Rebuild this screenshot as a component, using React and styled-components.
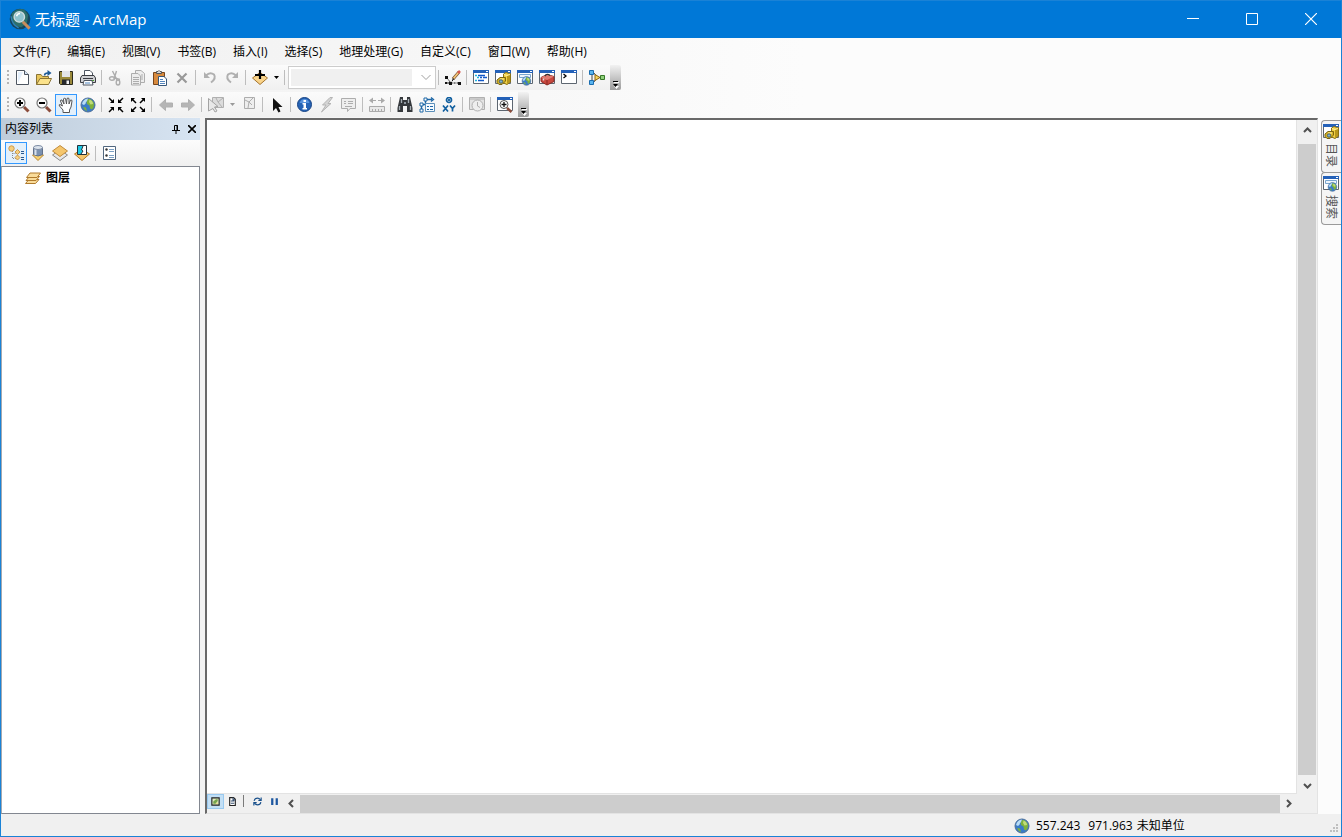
// dependencies
import React from "react";
import styled, { createGlobalStyle, css } from "styled-components";

const GlobalStyle = createGlobalStyle`
  * {
    box-sizing: border-box;
  }

  body {
    margin: 0;
    overflow: hidden;
    font-family: "Open Sans", "Noto Sans CJK SC", sans-serif;
    font-size: 12px;
    line-height: 16px;
    color: #000;
  }

  button,
  select {
    font: inherit;
    color: inherit;
  }

  svg {
    display: block;
    flex: none;
  }
`;

// window

const Window = styled.div`
  display: flex;
  flex-direction: column;
  height: 100vh;
  border: solid #1a82d6;
  border-width: 0 1px 1px;
  background: linear-gradient(90deg, #f0f0f0, #fcfcfc 60%);
`;

const TitleBar = styled.header`
  display: flex;
  align-items: center;
  height: 38px;
  padding: 0 1px 1px 8px;
  border-top: 1px solid #1a82d6;
  background: #0078d7;
  color: #fff;
`;

const Title = styled.h1`
  flex: 1;
  margin: 0 0 0 4px;
  font-size: 15px;
  font-weight: 400;
  line-height: 20px;
`;

const plainButton = css`
  display: flex;
  align-items: center;
  justify-content: center;
  flex: none;
  padding: 0;
  border: 0;
  background: transparent;
`;

const CaptionButton = styled.button`
  ${plainButton}
  width: 59px;
  height: 36px;
`;

const MenuBar = styled.nav`
  display: flex;
  align-items: center;
  gap: 1px;
  height: 27px;
  padding-left: 4px;
`;

const MenuItem = styled.button`
  ${plainButton}
  height: 22px;
  padding: 0 8px;
`;

// toolbars

const ToolbarRow = styled.div`
  display: flex;
  height: 26px;
  margin-bottom: ${(props) => (props.$last ? "0" : "1px")};
`;

const Toolbar = styled.div`
  display: flex;
  align-items: center;
  height: 25px;
  padding-left: 5px;
  background: linear-gradient(#fbfbfb, #f0f0f0);
`;

const Grip = styled.span`
  width: 5px;
  height: 15px;
  background: repeating-linear-gradient(#b4b4b4 0 2px, transparent 2px 4px) 1px 0 / 2px 100% no-repeat;
`;

const ToolButton = styled.button`
  ${plainButton}
  width: 22px;
  height: 22px;
  border: 1px solid ${(props) => (props.$active ? "#3399ff" : "transparent")};
  background: ${(props) => (props.$active ? "#e3f0fb" : "transparent")};
`;

const CaretButton = styled.button`
  ${plainButton}
  width: 11px;
  height: 22px;
`;

const Separator = styled.span`
  flex: none;
  width: 1px;
  height: 15px;
  margin: 0 3px 0 2px;
  background: #bdbdbd;
`;

const OverflowButton = styled.button`
  ${plainButton}
  align-items: flex-end;
  align-self: flex-start;
  width: 11px;
  height: 25px;
  margin-left: 2px;
  padding-bottom: 1px;
  border-radius: 0 2px 2px 0;
  background: linear-gradient(#f2f2f2, #9c9c9c);
`;

const ScaleBox = styled.label`
  position: relative;
  width: 148px;
  height: 23px;
`;

const ScaleSelect = styled.select`
  appearance: none;
  display: block;
  width: 100%;
  height: 100%;
  padding: 2px 23px 2px 2px;
  border: 1px solid #ccc;
  border-radius: 0;
  background: linear-gradient(#f0f0f0, #f0f0f0) content-box, #fff;
  opacity: 1;
`;

const ScaleArrow = styled.svg`
  position: absolute;
  top: 8px;
  right: 5px;
  pointer-events: none;
`;

// table of contents

const Workspace = styled.main`
  display: flex;
  flex: 1;
  min-height: 0;
`;

const TocPanel = styled.aside`
  display: flex;
  flex-direction: column;
  flex: none;
  width: 199px;
`;

const TocHeader = styled.div`
  display: flex;
  align-items: center;
  height: 22px;
  padding-left: 4px;
  background: linear-gradient(90deg, #bfcddb, #d7e4f2);
`;

const TocTitle = styled.h2`
  flex: 1;
  margin: 0;
  font-size: 12px;
  font-weight: 400;
`;

const HeaderButton = styled.button`
  ${plainButton}
  width: 16px;
  height: 16px;
`;

const TocToolbar = styled.div`
  display: flex;
  align-items: center;
  height: 26px;
  padding-left: 4px;
  background: linear-gradient(#fcfcfc, #f0f0f0);
`;

const LayerTree = styled.ul`
  flex: 1;
  margin: 0;
  padding: 2px 0 0 23px;
  border: 1px solid #828790;
  border-left-color: #a5a9b0;
  background: #fff;
  list-style: none;
`;

const LayerItem = styled.li`
  display: flex;
  align-items: center;
  gap: 5px;
  height: 18px;
  font-weight: 700;
`;

// map view

const MapFrame = styled.section`
  display: flex;
  flex: 1;
  min-width: 0;
  margin-left: 5px;
  border: solid;
  border-width: 2px 1px 1px 2px;
  border-color: #696969 #e3e3e3 #e3e3e3 #696969;
  background: #f0f0f0;
`;

const MapColumn = styled.div`
  display: flex;
  flex-direction: column;
  flex: 1;
  min-width: 0;
`;

const MapCanvas = styled.div`
  flex: 1;
  border: solid #e3e3e3;
  border-width: 0 1px 1px 0;
  background: #fff;
`;

const BottomBar = styled.div`
  display: flex;
  height: 19px;
`;

const ViewButton = styled.button`
  ${plainButton}
  width: 17px;
  height: 15px;
  border: ${(props) => (props.$active ? "1px solid #99c9ef" : "0")};
  background: ${(props) => (props.$active ? "#c2dff5" : "transparent")};
`;

const ViewSeparator = styled.span`
  width: 1px;
  height: 12px;
  margin: 1px 5px 0 2px;
  background: #7a7a7a;
`;

const ScrollColumn = styled.div`
  display: flex;
  flex-direction: column;
  flex: none;
  width: 20px;
  padding: 0 1px 18px;
`;

const ScrollButton = styled.button`
  ${plainButton}
  width: ${(props) => (props.$horizontal ? "17px" : "100%")};
  height: ${(props) => (props.$horizontal ? "19px" : "20px")};
`;

const ScrollThumb = styled.div`
  flex: 1;
  margin: ${(props) => (props.$horizontal ? "1px 0 0" : "4px 0 0")};
  background: #cdcdcd;
`;

// dock

const Dock = styled.aside`
  display: flex;
  flex-direction: column;
  flex: none;
  width: 23px;
  padding: 2px 0 0 3px;
`;

const DockTab = styled.button`
  ${plainButton}
  flex-direction: column;
  justify-content: flex-start;
  gap: 3px;
  height: 53px;
  margin-bottom: -1px;
  padding: 3px 1px 0 0;
  border: 1px solid #9a9a9a;
  border-right: 0;
  border-radius: 4px 0 0 4px;
  background: #f5f5f5;
  color: #555;
`;

const DockLabel = styled.span`
  writing-mode: vertical-rl;
  text-orientation: sideways;
`;

// status

const StatusBar = styled.footer`
  display: flex;
  align-items: center;
  justify-content: flex-end;
  height: 22px;
  padding-top: 2px;
  background: #f0f0f0;
`;

const Coordinates = styled.output`
  display: flex;
  flex: none;
  gap: 8px;
  width: 281px;
  margin-left: 6px;
`;

const Units = styled.span`
  margin-left: -4px;
`;

const SizeGrip = styled.svg`
  align-self: flex-end;
  margin: 0 2px 2px 12px;
`;

// icons

const Icon = ({ children, size = 16, ...rest }) => (
  <svg
    width={size}
    height={size}
    viewBox="0 0 16 16"
    fill="none"
    aria-hidden="true"
    {...rest}
  >
    {children}
  </svg>
);

const Globe = () => (
  <>
    <circle cx="8" cy="8" r="7" fill="#3a7bc8" stroke="#4d6f98" />
    <path d="M2 7Q3 2 8 1.500Q8 4 6 5Q6 7 4 8Z" fill="#b9dcf5" />
    <path d="M8 2Q12 1.500 14 6.500Q14.500 10 12 12.500L10 11.500L9.500 8.500L7 7Q6 5 8 2ZM3 10L6 10.500L7 14Q4 13 3 10Z" fill="#7fb23c" />
    <path d="M9.500 2.500Q13 3.500 13 7L10.500 7.500L9 5Z" fill="#c0dc7a" />
  </>
);

const Panel = ({ children }) => (
  <>
    <path d="M.5 .5H15.500V13.500H.5Z" fill="#fff" stroke="#5d6670" />
    <path d="M0 0H16V3H0Z" fill="#2461b8" />
    <path d="M13 1H15V2H13Z" fill="#fff" />
    {children}
  </>
);

const Lens = ({ sign }) => (
  <>
    <path d="M10 10L14.500 14.500" stroke="#8b4c3b" strokeWidth="3" />
    <circle cx="6" cy="6" r="5" fill="#fafafa" stroke="#777" strokeWidth="1.200" />
    <path d={sign} stroke="#000" strokeWidth="2" />
  </>
);

const icons = {
  app: (
    <>
      <circle cx="8" cy="8" r="7.500" fill="#15465f" />
      <path d="M2 4Q6 0 11 1L14 5L13 11L9 14Q3 13 2 9Z" fill="#2d6f6c" />
      <path d="M1.500 6Q2 12 7 14.500" stroke="#2f83b8" />
      <path d="M10 10L15 15" stroke="#c98d5c" strokeWidth="2.200" />
      <circle cx="7.500" cy="6.500" r="3.800" fill="#8fc3cf" stroke="#cfdcde" />
      <path d="M5.500 6Q6 4 8 4" stroke="#fff" />
    </>
  ),
  new: (
    <>
      <path d="M2.500 .5H10L14.500 4.500V14.500H2.500Z" fill="#fff" stroke="#4d5560" />
      <path d="M4 2H9L4 13Z" fill="#e4effb" />
      <path d="M10.500 .5V4.500H14.500" fill="#d5e4f5" stroke="#4d5560" />
    </>
  ),
  open: (
    <>
      <path d="M.5 14.500V4.500H5L6.500 6.500H12.500V9" fill="#e8c65b" stroke="#8a7436" />
      <path d="M.5 14.500L4 8.500H15.500L12.500 14.500Z" fill="#fbe28b" stroke="#8a7436" />
      <path d="M8.500 5.500Q8.500 3 12 3" stroke="#1c5a97" strokeWidth="1.500" />
      <path d="M11.500 0L15.500 3L11.500 6Z" fill="#1c5a97" />
    </>
  ),
  save: (
    <>
      <path d="M1.500 1.500H14.500V14.500H2.500L1.500 13.500Z" fill="#9b8a3b" stroke="#2d2b1c" />
      <path d="M4 1H12V7H4Z" fill="#e4e5e8" />
      <path d="M4 9.500H12V14.500H4Z" fill="#25272c" />
      <path d="M8.500 10.500H11V14H8.500Z" fill="#f4f4f4" />
    </>
  ),
  print: (
    <>
      <path d="M4.500 6V.5H10L12.500 3V6" fill="#fff" stroke="#4d5560" />
      <path d="M2 5.500H14L15.500 8V12.500H.5V8Z" fill="#cfd0d3" stroke="#3b3d42" />
      <path d="M3 8.500H13" stroke="#3b3d42" />
      <path d="M13 10V11" stroke="#4aa02c" strokeWidth="2" />
      <path d="M4 10.500H12L13 15H3Z" fill="#fff" stroke="#4d5560" />
      <path d="M5 13H10" stroke="#4e86c0" />
    </>
  ),
  cut: (
    <g stroke="#adadad" strokeWidth="1.400">
      <path d="M4.500 1L9 10M8.500 1L6 9" />
      <ellipse cx="4" cy="8.500" rx="2.500" ry="1.800" />
      <ellipse cx="10" cy="12.500" rx="1.800" ry="2.500" />
      <path d="M6.500 8L12 9.500" />
    </g>
  ),
  copy: (
    <g fill="#ededed" stroke="#adadad">
      <path d="M5.500 .5H11L14.500 3.500V12.500H5.500Z" />
      <path d="M1.500 3.500H8L10.500 6V15H1.500Z" />
      <path d="M3 7.500H9M3 9.500H9M3 11.500H9M3 13.500H9M11 5H13M11 7H13M11 9H13" />
    </g>
  ),
  paste: (
    <>
      <path d="M1.500 2.500H12.500V14.500H1.500Z" fill="#d88a3d" stroke="#76451c" />
      <path d="M4.500 3.500V1.500H6L7 .5L8 1.500H9.500V3.500Z" fill="#d6d6d6" stroke="#555" />
      <path d="M6.500 6.500H12L14.500 9V15.500H6.500Z" fill="#fff" stroke="#385778" />
      <path d="M8 9.500H11M8 11.500H13M8 13.500H13" stroke="#5485bd" />
    </>
  ),
  remove: <path d="M3.500 3.500L12.500 12.500M12.500 3.500L3.500 12.500" stroke="#999" strokeWidth="2.200" />,
  undo: (
    <>
      <path d="M4 5.500Q8 1.500 12 4.500Q14.500 8.500 9 12.500" stroke="#b0b0b0" strokeWidth="2" />
      <path d="M2 2V8H8Z" fill="#b0b0b0" />
    </>
  ),
  add: (
    <>
      <path d="M.5 8L8 2.500L15.500 8L8 14.500Z" fill="#fad48a" stroke="#a4742f" />
      <path d="M8 0V9M3 5H13" stroke="#000" strokeWidth="2.200" />
    </>
  ),
  editor: (
    <>
      <path d="M2 8L6 13L14 13M2 13H6L9 8" stroke="#111" strokeDasharray="2 1" />
      <path d="M0 6H3V9H0ZM4 12H7V15H4ZM13 12H16V15H13ZM0 12H2V14H0Z" fill="#111" />
      <path d="M8 9L14 2" stroke="#775036" strokeWidth="3" />
      <path d="M8.500 8.500L13.500 2.500" stroke="#f4c674" strokeWidth="1.800" />
      <path d="M13 3L15 1" stroke="#d8594f" strokeWidth="2.500" />
      <path d="M7 10.500L8 8L9.500 9.500Z" fill="#333" />
    </>
  ),
  toc: (
    <Panel>
      <path d="M2 5.500H4M4 7.500H6M2 10.500H4" stroke="#20b5df" strokeWidth="1.400" />
      <path d="M5 5.500H12M7 7.500H9M10 7.500H14M5 10.500H11" stroke="#1258c9" strokeWidth="1.400" />
    </Panel>
  ),
  catalog: (
    <Panel>
      <path d="M8.500 4L11 2.500L15.500 4V12L12 14.500L8.500 13Z" fill="#f1d045" stroke="#8a7214" />
      <path d="M12 5.500V14L15 12V4.500Z" fill="#b8971c" />
      <path d="M9 4.500L12 5.500L15 4.500" stroke="#fff0a0" />
      <path d="M2 12.500V10L5 7.500H10.500V11L7 14.500H4Z" fill="#d7b425" stroke="#7a6512" />
      <path d="M5 9H9" stroke="#fbe783" strokeWidth="1.400" />
      <circle cx="6" cy="11.500" r="1.700" fill="#7db2cf" stroke="#4b6269" />
    </Panel>
  ),
  search: (
    <Panel>
      <path d="M2.500 4.500H13.500V7.500H2.500Z" fill="#edf4fb" stroke="#79a5ce" />
      <g transform="translate(4.500 6) scale(.62)">
        <Globe />
      </g>
    </Panel>
  ),
  toolbox: (
    <Panel>
      <path d="M2 7.500L8 4.500L15 6.500V11.500L8 15L2 11.500Z" fill="#c8473e" stroke="#8b2a23" />
      <path d="M2 7.500L8 10L15 6.500L8 4.500Z" fill="#df7a70" />
      <path d="M8 10V15" stroke="#8b2a23" />
      <path d="M6 6Q8 3 11 5.500" stroke="#333" strokeWidth="1.400" />
      <path d="M4.500 8.500V10.500" stroke="#ddd" strokeWidth="1.500" />
    </Panel>
  ),
  python: (
    <Panel>
      <path d="M2.500 4L5 6L2.500 8" stroke="#000" strokeWidth="1.300" />
    </Panel>
  ),
  model: (
    <>
      <path d="M3 3V12M5 3L8 7L5 12M10 7.500H13" stroke="#444" />
      <path d="M.5 .5H4.500V4.500H.5Z M.5 10.500H4.500V14.500H.5Z" fill="#59b4ee" stroke="#1a6caf" />
      <path d="M6 4.500L11 7.500L6 10.500Z" fill="#f6d45b" stroke="#8c6512" />
      <path d="M11.500 5.500H15.500V9.500H11.500Z" fill="#8fd07a" stroke="#367728" />
    </>
  ),
  zoomIn: <Lens sign="M6 3V9M3 6H9" />,
  zoomOut: <Lens sign="M3 6H9" />,
  pan: (
    <path
      d="M5 15.500V13L1.500 9Q.5 7.500 2 7.500L4.500 9L2.500 4Q2.500 2.500 4 3L6 7L5.500 2Q6 .5 7.500 1.500L8.500 7L9 1.500Q10 .5 11 1.500L11 7L12.500 3Q14 2.500 14 4L13 10L11.500 13V15.500Z"
      fill="#fff"
      stroke="#555"
    />
  ),
  globe: <Globe />,
  shrink: (
    <>
      <path d="M1 1L5 5M15 1L11 5M1 15L5 11M15 15L11 11" stroke="#000" strokeWidth="1.500" />
      <path d="M6 2V6H2ZM10 2V6H14ZM6 14V10H2ZM10 14V10H14Z" fill="#000" />
    </>
  ),
  expand: (
    <>
      <path d="M2 2L6 6M14 2L10 6M2 14L6 10M14 14L10 10" stroke="#000" strokeWidth="1.500" />
      <path d="M1 5V1H5ZM15 5V1H11ZM1 11V15H5ZM15 11V15H11Z" fill="#000" />
    </>
  ),
  back: <path d="M1.500 8L7.500 2.500V6H14.500V10H7.500V13.500Z" fill="#b5b5b5" stroke="#b0b0b0" />,
  forward: <path d="M14.500 8L8.500 2.500V6H1.500V10H8.500V13.500Z" fill="#b5b5b5" stroke="#b0b0b0" />,
  select: (
    <g stroke="#b0b0b0">
      <path d="M4.500 .5H15.500V10.500H4.500Z" fill="#dcdcdc" />
      <path d="M8 1L10 5L15 1M10 5L14 10" />
      <path d="M.5 1.500L10 9.500L6.500 10L9 14L7 15L5 11.500L.5 14Z" fill="#e8e8e8" stroke="#a3a3a3" />
    </g>
  ),
  clear: (
    <g stroke="#adadad">
      <path d="M3.500 .5H13.500V11.500H3.500Z" fill="#eee" />
      <path d="M4 3L8 5L12 1M8 5L7 11M8 5L11 8" />
    </g>
  ),
  arrow: <path d="M4 1V14L7 11L9.500 15.500L11.500 14.500L9.500 10H13.500Z" fill="#111" />,
  identify: (
    <>
      <circle cx="7.500" cy="7.500" r="7" fill="#2563b5" stroke="#174384" />
      <path d="M2.500 6Q4 2 7.500 2Q11 2 12.500 6Z" fill="#5a94dc" />
      <path d="M6.500 3H9V5H6.500ZM5.500 6H9V11H10V12.500H5.500V11H6.500V7.500H5.500Z" fill="#fff" />
    </>
  ),
  link: <path d="M11 .5L3.500 8H7L2.500 15L12 6.500H9L13.500 .5Z" fill="#d4d4d4" stroke="#b4b4b4" />,
  popup: (
    <g stroke="#adadad">
      <path d="M.5 1.500H14.500V11.500H9L6.500 14.500V11.500H.5Z" fill="#eee" />
      <path d="M3 4.500H5M7 4.500H12M3 6.500H5M7 6.500H12M4 9.500H11" />
    </g>
  ),
  measure: (
    <>
      <path d="M0 3.500L4 .5V3H6V4H4V6.500ZM16 3.500L12 .5V3H10V4H12V6.500Z" fill="#aaa" />
      <path d="M4 3H7V4H4ZM9 3H12V4H9Z" fill="#aaa" />
      <path d="M.5 9.500H15.500V14.500H.5Z" fill="#e8e8e8" stroke="#aaa" />
      <path d="M3.500 12V14M6.500 12V14M9.500 12V14M12.500 12V14" stroke="#aaa" />
    </>
  ),
  find: (
    <>
      <path d="M3 0H6V3H10V0H13L15.500 11V15H10V9H6V15H.5V11Z" fill="#35383c" />
      <path d="M4.500 2V6M11.500 2V6M2.500 9V13M13.500 9V13" stroke="#a5adb4" strokeWidth="1.300" />
      <path d="M7 5H9V7H7Z" fill="#8d969f" />
    </>
  ),
  route: (
    <g stroke="#1d67a6">
      <path d="M2.500 13V7.500H6.500V2.500H13M12 .5L14.500 2.500L12 4.500" strokeWidth="1.300" />
      <path d="M1 6H4V9H1ZM5 1H8V4H5ZM1 12H4V15H1Z" fill="#fff" />
      <path d="M6.500 6.500H15.500V14.500H6.500Z" fill="#f5faff" stroke="#5c8fb9" />
      <path d="M8 9.500H10M11 9.500H14M8 12.500H10M11 12.500H14" />
    </g>
  ),
  xy: (
    <g stroke="#1260a0" strokeWidth="1.700">
      <circle cx="8" cy="3" r="2.500" />
      <circle cx="8" cy="3" r=".5" />
      <path d="M2 8.500L7 14.500M7 8.500L2 14.500M9 8.500L11.500 11.500L14 8.500M11.500 11.500V14.500" />
    </g>
  ),
  time: (
    <g stroke="#b0b0b0">
      <path d="M.5 .5H15.500V12.500H.5Z" fill="#e4e4e4" />
      <path d="M0 2H16" />
      <circle cx="8.500" cy="8.500" r="5.500" fill="#eee" />
      <path d="M8.500 5V9L11 10.500" />
    </g>
  ),
  viewer: (
    <Panel>
      <path d="M10 11L14.500 15" stroke="#8b4c3b" strokeWidth="2.500" />
      <circle cx="7" cy="7.500" r="4" fill="#fff" stroke="#555" />
      <path d="M7 5V10M4.500 7.500H9.500" stroke="#111" strokeWidth="1.300" />
    </Panel>
  ),
  order: (
    <>
      <path d="M4.500 6V13.500H8M4.500 8.500H8" stroke="#8b8b8b" strokeDasharray="1 1" />
      <circle cx="3.500" cy="3.500" r="2.700" fill="#f6cf7c" stroke="#c99a52" />
      <path d="M9.500 4.500L12 7L9.500 9.500L7 7ZM9.500 10L12 12.500L9.500 15L7 12.500Z" fill="#f6cf7c" stroke="#c99a52" />
      <path d="M13 6.500H16M13 8.500H16M13 12.500H16M13 14.500H16" stroke="#285991" />
    </>
  ),
  source: (
    <>
      <path d="M2.500 10L8 9L13.500 10L8 15.500Z" fill="#f8d16f" stroke="#b58331" />
      <path d="M3.500 2.500V9.500Q8 12.500 12.500 9.500V2.500" fill="#7b91b0" stroke="#62718a" />
      <path d="M5.500 4V10" stroke="#d8e1ec" strokeWidth="2" />
      <ellipse cx="8" cy="2.500" rx="4.500" ry="2" fill="#dce4ed" stroke="#7c8ba3" />
    </>
  ),
  visibility: (
    <>
      <path d="M.5 10L8 5L15.500 10L8 15.500Z" fill="#e7e7e7" stroke="#888" />
      <path d="M.5 6L8 .5L15.500 6L8 11.500Z" fill="#f5c66c" stroke="#c08a3a" />
    </>
  ),
  selection: (
    <>
      <path d="M.5 9L8 4L15.500 9L8 15.500Z" fill="#f5c66c" stroke="#b47a27" />
      <path d="M3.500 .5H12.500V9.500H3.500Z" fill="#1dc8e4" stroke="#25313a" />
      <path d="M9 1H12V9H7L9 6L7.500 5Z" fill="#fff" />
      <path d="M9 1L7.500 5L9 6L7 9" stroke="#25313a" />
    </>
  ),
  options: (
    <>
      <path d="M1.500 1.500H13.500V14.500H1.500Z" fill="#fff" stroke="#51677f" />
      <circle cx="4.500" cy="4.500" r="1.200" fill="#333" />
      <circle cx="4.500" cy="10.500" r="1.200" fill="#333" />
      <path d="M7 4.500H12M7 6.500H12M7 10.500H12M7 12.500H12" stroke="#7ba0c4" />
    </>
  ),
  layers: (
    <g fill="#f9dc9a" stroke="#b07a2c">
      <path d="M.5 13.500L4 9.500H14L10.500 13.500Z" />
      <path d="M1 10.500L4.500 6.500H14.500L11 10.500Z" />
      <path d="M1.500 7.500L5 3H15.500L12 7.500Z" />
    </g>
  ),
  dataView: (
    <>
      <path d="M1.500 1.500H14.500V14.500H1.500Z" fill="#dfeac0" stroke="#222" strokeWidth="2" />
      <path d="M4 12V8L9 4H12V7L8 12Z" fill="#76a54d" />
      <path d="M9 10H12V12H9Z" fill="#f0d77a" />
    </>
  ),
  layoutView: (
    <>
      <path d="M3 1H10L13 4V15H3Z" fill="#fff" stroke="#222" strokeWidth="2" />
      <path d="M9 1V5H13M5 7H11M5 11H11" stroke="#375070" strokeWidth="2" />
    </>
  ),
  refresh: (
    <g stroke="#184f8b" strokeWidth="2">
      <path d="M2 7Q3 2 8 2Q11 2 13.500 5M14 9Q13 14 8 14Q5 14 2.500 11" />
      <path d="M14.500 1V6H9.500M1.500 15V10H6.500" />
    </g>
  ),
  pause: <path d="M2 2H6V14H2ZM10 2H14V14H10Z" fill="#1d57a0" />,
};

icons.redo = <g transform="translate(16 0) scale(-1 1)">{icons.undo}</g>;

const arrowPaths = {
  up: "M1 6L4.500 2.500L8 6",
  down: "M1 3L4.500 6.500L8 3",
  left: "M6 1L2.500 4.500L6 8",
  right: "M3 1L6.500 4.500L3 8",
};

const Arrow = ({ direction }) => (
  <svg width="9" height="9" fill="none" aria-hidden="true">
    <path d={arrowPaths[direction]} stroke="#505050" strokeWidth="2" />
  </svg>
);

const Caret = ({ disabled }) => (
  <svg width="5" height="3" aria-hidden="true">
    <path d="M0 0H5L2.500 3Z" fill={disabled ? "#999" : "#000"} />
  </svg>
);

const Overflow = ({ label }) => (
  <OverflowButton aria-label={label}>
    <svg width="7" height="8" aria-hidden="true">
      <path d="M2 1H7V2H2ZM2 5H7L4.500 8Z" fill="#fff" />
      <path d="M1 0H6V1H1ZM1 3H6L3.500 6Z" fill="#000" />
    </svg>
  </OverflowButton>
);

const menus = [
  "文件(F)",
  "编辑(E)",
  "视图(V)",
  "书签(B)",
  "插入(I)",
  "选择(S)",
  "地理处理(G)",
  "自定义(C)",
  "窗口(W)",
  "帮助(H)",
];

// "|" is a separator
const fileTools = ["new", "open", "save", "print", "|", "cut", "copy", "paste", "remove", "|", "undo", "redo", "|", "add"];
const windowTools = ["|", "editor", "|", "toc", "catalog", "search", "toolbox", "python", "|", "model"];
const navTools = ["zoomIn", "zoomOut", "pan", "globe", "|", "shrink", "expand", "|", "back", "forward", "|", "select"];
const queryTools = ["clear", "|", "arrow", "|", "identify", "link", "popup", "|", "measure", "|", "find", "route", "xy", "|", "time", "|", "viewer"];
const tocTools = ["order", "source", "visibility", "selection", "|", "options"];

const Tools = ({ items, active }) =>
  items.map((name, index) =>
    name === "|" ? (
      <Separator key={index} />
    ) : (
      <ToolButton key={name} aria-label={name} $active={name === active}>
        <Icon>{icons[name]}</Icon>
      </ToolButton>
    )
  );

const App = () => {
  return (
    <Window>
      <GlobalStyle />
      <TitleBar>
        <Icon size={22}>{icons.app}</Icon>
        <Title>无标题 - ArcMap</Title>
        <CaptionButton aria-label="最小化">
          <svg width="12" height="12">
            <path d="M0 5.500H12" stroke="#fff" />
          </svg>
        </CaptionButton>
        <CaptionButton aria-label="最大化">
          <svg width="12" height="12" fill="none">
            <path d="M.5 .5H11.500V11.500H.5Z" stroke="#fff" />
          </svg>
        </CaptionButton>
        <CaptionButton aria-label="关闭">
          <svg width="12" height="12">
            <path d="M0 0L12 12M12 0L0 12" stroke="#fff" strokeWidth="1.200" />
          </svg>
        </CaptionButton>
      </TitleBar>
      <MenuBar>
        {menus.map((menu) => (
          <MenuItem key={menu}>{menu}</MenuItem>
        ))}
      </MenuBar>
      <ToolbarRow>
        <Toolbar>
          <Grip />
          <Tools items={fileTools} />
          <CaretButton aria-label="添加数据">
            <Caret />
          </CaretButton>
          <Separator />
          <ScaleBox>
            <ScaleSelect aria-label="比例" disabled />
            <ScaleArrow width="10" height="7" fill="none">
              <path d="M.5 1L5 5.500L9.500 1" stroke="#a0a0a0" />
            </ScaleArrow>
          </ScaleBox>
          <Tools items={windowTools} />
          <Overflow label="标准工具选项" />
        </Toolbar>
      </ToolbarRow>
      <ToolbarRow $last>
        <Toolbar>
          <Grip />
          <Tools items={navTools} active="pan" />
          <CaretButton aria-label="选择要素">
            <Caret disabled />
          </CaretButton>
          <Tools items={queryTools} />
          <Overflow label="工具选项" />
        </Toolbar>
      </ToolbarRow>
      <Workspace>
        <TocPanel>
          <TocHeader>
            <TocTitle>内容列表</TocTitle>
            <HeaderButton aria-label="自动隐藏">
              <svg width="8" height="9" fill="none">
                <path d="M2.500 5V.5H5.500V5M5 0V5M0 5.500H8M4 6V9" stroke="#000" />
              </svg>
            </HeaderButton>
            <HeaderButton aria-label="关闭面板">
              <svg width="8" height="8">
                <path d="M0 0L8 8M8 0L0 8" stroke="#000" strokeWidth="1.600" />
              </svg>
            </HeaderButton>
          </TocHeader>
          <TocToolbar>
            <Tools items={tocTools} active="order" />
          </TocToolbar>
          <LayerTree>
            <LayerItem>
              <Icon>{icons.layers}</Icon>
              图层
            </LayerItem>
          </LayerTree>
        </TocPanel>
        <MapFrame>
          <MapColumn>
            <MapCanvas />
            <BottomBar>
              <ViewButton aria-label="数据视图" $active>
                <Icon size={9}>{icons.dataView}</Icon>
              </ViewButton>
              <ViewButton aria-label="布局视图">
                <Icon size={9}>{icons.layoutView}</Icon>
              </ViewButton>
              <ViewSeparator />
              <ViewButton aria-label="刷新">
                <Icon size={9}>{icons.refresh}</Icon>
              </ViewButton>
              <ViewButton aria-label="暂停绘制">
                <Icon size={9}>{icons.pause}</Icon>
              </ViewButton>
              <ScrollButton $horizontal aria-label="向左滚动">
                <Arrow direction="left" />
              </ScrollButton>
              <ScrollThumb $horizontal />
              <ScrollButton $horizontal aria-label="向右滚动">
                <Arrow direction="right" />
              </ScrollButton>
            </BottomBar>
          </MapColumn>
          <ScrollColumn>
            <ScrollButton aria-label="向上滚动">
              <Arrow direction="up" />
            </ScrollButton>
            <ScrollThumb />
            <ScrollButton aria-label="向下滚动">
              <Arrow direction="down" />
            </ScrollButton>
          </ScrollColumn>
        </MapFrame>
        <Dock>
          <DockTab>
            <Icon>{icons.catalog}</Icon>
            <DockLabel>目录</DockLabel>
          </DockTab>
          <DockTab>
            <Icon>{icons.search}</Icon>
            <DockLabel>搜索</DockLabel>
          </DockTab>
        </Dock>
      </Workspace>
      <StatusBar>
        <Icon>{icons.globe}</Icon>
        <Coordinates>
          <span>557.243</span>
          <span>971.963</span>
          <Units>未知单位</Units>
        </Coordinates>
        <SizeGrip width="10" height="10">
          <path
            d="M7 0H9V2H7ZM4 3H6V5H4ZM7 3H9V5H7ZM1 6H3V8H1ZM4 6H6V8H4ZM7 6H9V8H7Z"
            fill="#bfbfbf"
          />
        </SizeGrip>
      </StatusBar>
    </Window>
  );
};

export default App;
